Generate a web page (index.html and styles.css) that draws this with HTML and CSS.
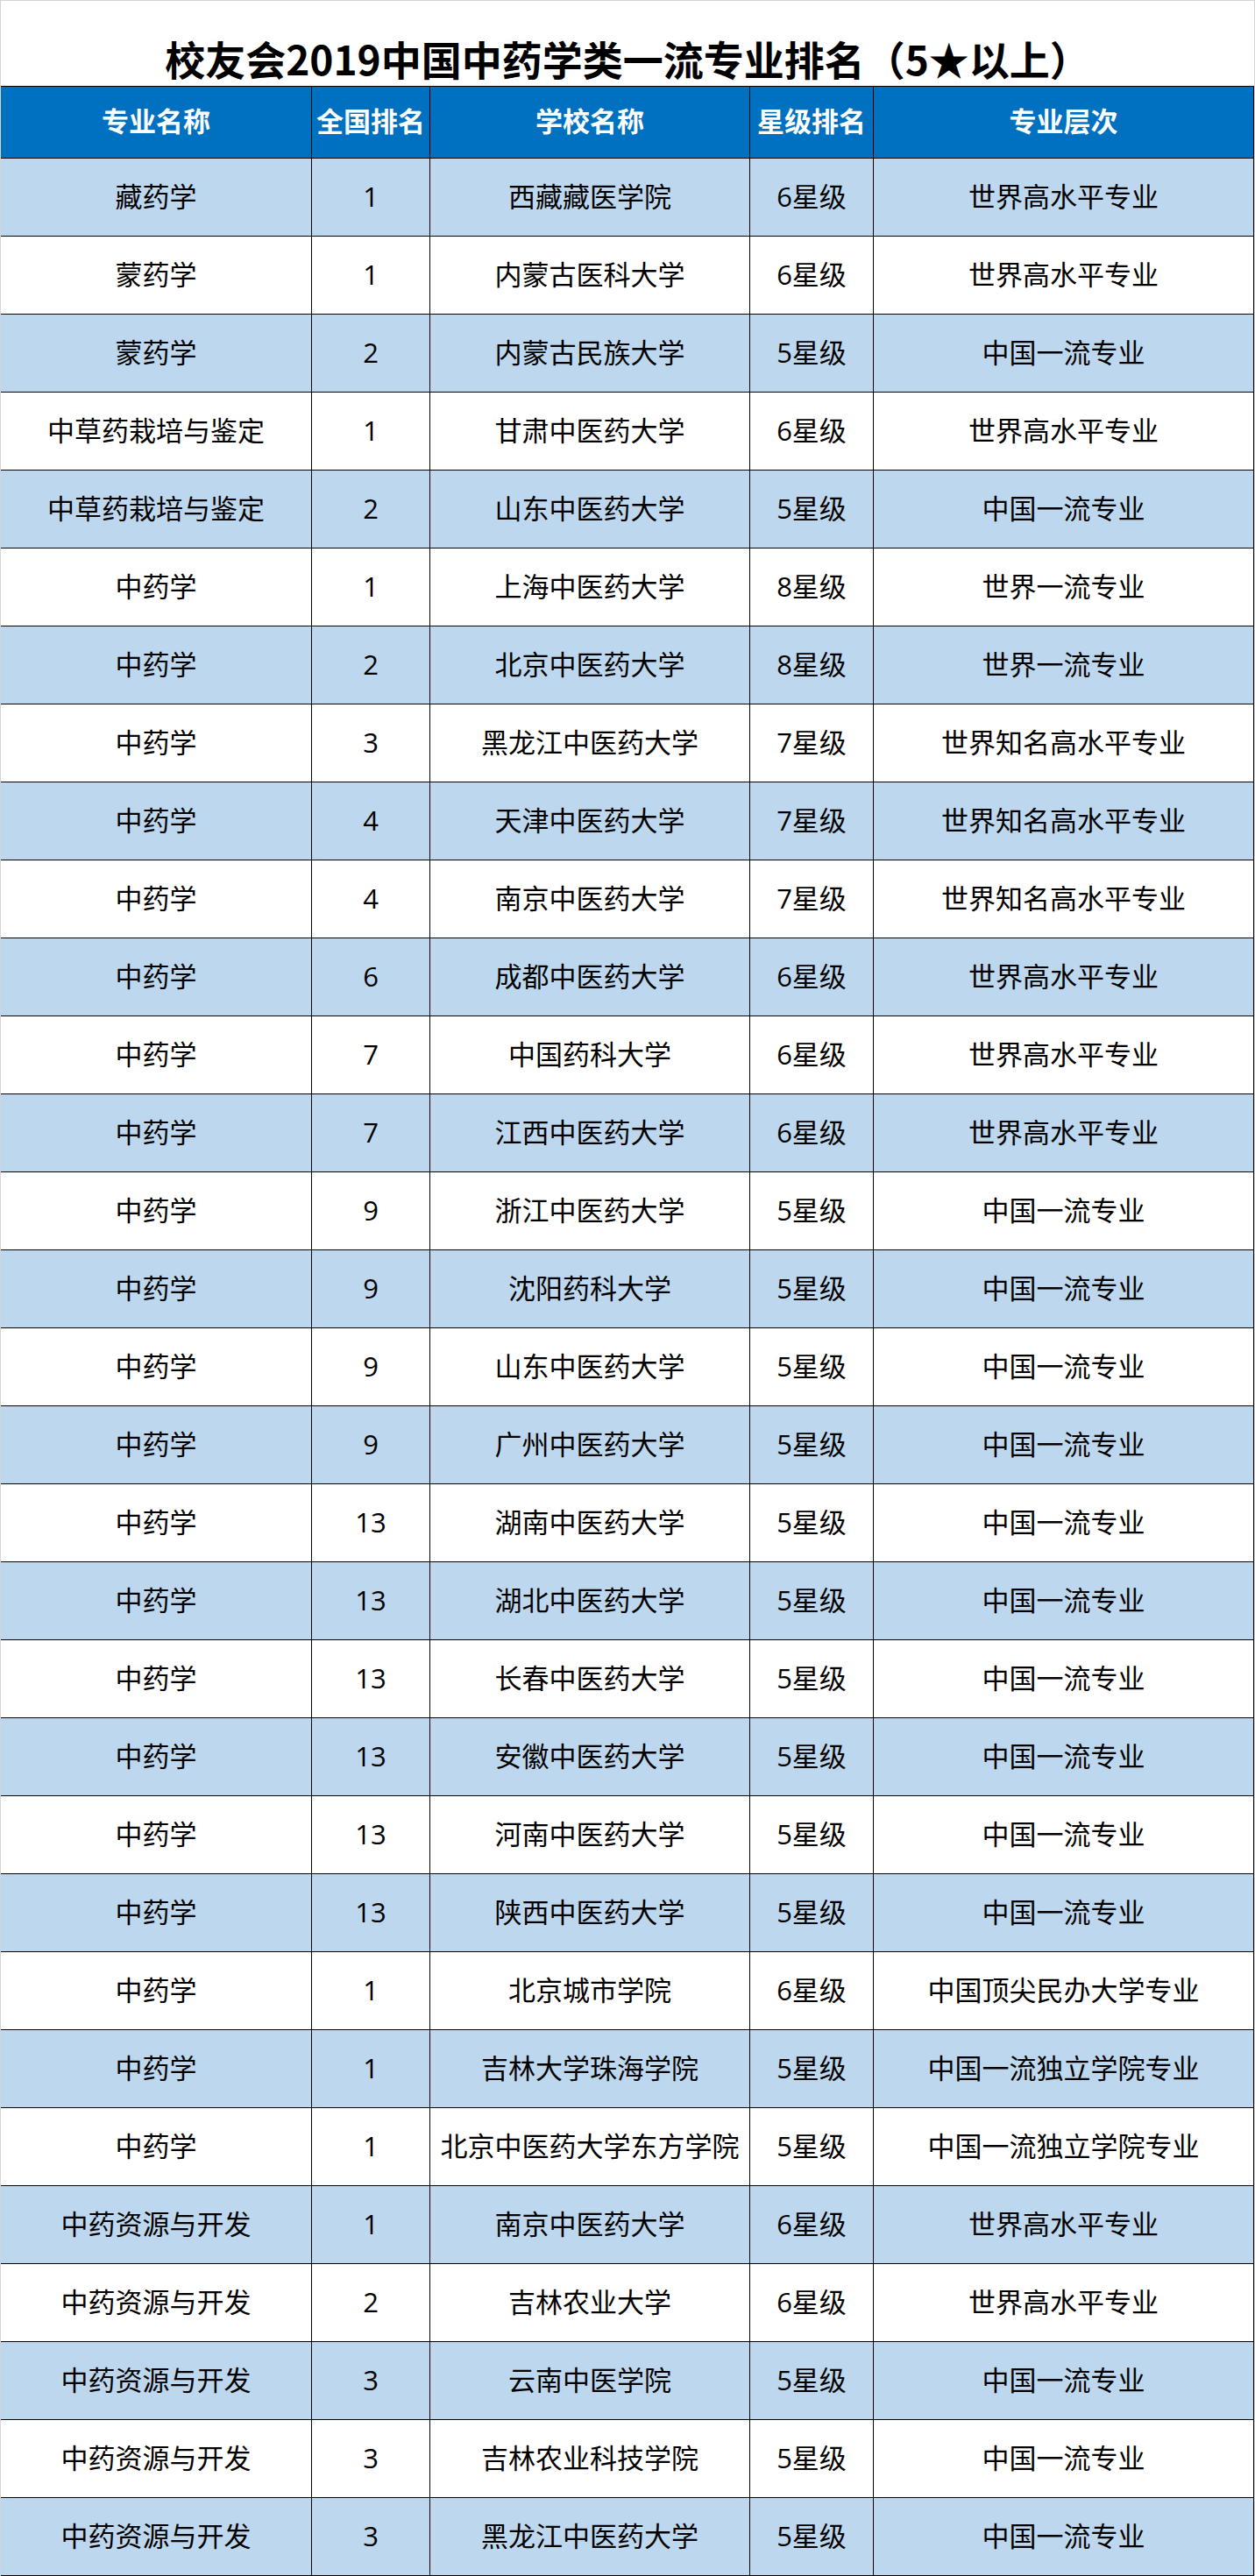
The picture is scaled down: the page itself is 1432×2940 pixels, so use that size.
FILE: index.html
```html
<!DOCTYPE html>
<html lang="zh-CN">
<head>
<meta charset="utf-8">
<title>校友会2019中国中药学类一流专业排名（5★以上）</title>
<link rel="stylesheet" href="styles.css">
</head>
<body>
<div class="page">
  <h1 class="title">校友会2019中国中药学类一流专业排名（5★以上）</h1>
  <div class="table">
    <div class="row head">
      <div class="cell">专业名称</div><div class="cell">全国排名</div><div class="cell">学校名称</div><div class="cell">星级排名</div><div class="cell">专业层次</div>
    </div>
    <div class="row blue"><div class="cell">藏药学</div><div class="cell">1</div><div class="cell">西藏藏医学院</div><div class="cell">6星级</div><div class="cell">世界高水平专业</div></div>
    <div class="row"><div class="cell">蒙药学</div><div class="cell">1</div><div class="cell">内蒙古医科大学</div><div class="cell">6星级</div><div class="cell">世界高水平专业</div></div>
    <div class="row blue"><div class="cell">蒙药学</div><div class="cell">2</div><div class="cell">内蒙古民族大学</div><div class="cell">5星级</div><div class="cell">中国一流专业</div></div>
    <div class="row"><div class="cell">中草药栽培与鉴定</div><div class="cell">1</div><div class="cell">甘肃中医药大学</div><div class="cell">6星级</div><div class="cell">世界高水平专业</div></div>
    <div class="row blue"><div class="cell">中草药栽培与鉴定</div><div class="cell">2</div><div class="cell">山东中医药大学</div><div class="cell">5星级</div><div class="cell">中国一流专业</div></div>
    <div class="row"><div class="cell">中药学</div><div class="cell">1</div><div class="cell">上海中医药大学</div><div class="cell">8星级</div><div class="cell">世界一流专业</div></div>
    <div class="row blue"><div class="cell">中药学</div><div class="cell">2</div><div class="cell">北京中医药大学</div><div class="cell">8星级</div><div class="cell">世界一流专业</div></div>
    <div class="row"><div class="cell">中药学</div><div class="cell">3</div><div class="cell">黑龙江中医药大学</div><div class="cell">7星级</div><div class="cell">世界知名高水平专业</div></div>
    <div class="row blue"><div class="cell">中药学</div><div class="cell">4</div><div class="cell">天津中医药大学</div><div class="cell">7星级</div><div class="cell">世界知名高水平专业</div></div>
    <div class="row"><div class="cell">中药学</div><div class="cell">4</div><div class="cell">南京中医药大学</div><div class="cell">7星级</div><div class="cell">世界知名高水平专业</div></div>
    <div class="row blue"><div class="cell">中药学</div><div class="cell">6</div><div class="cell">成都中医药大学</div><div class="cell">6星级</div><div class="cell">世界高水平专业</div></div>
    <div class="row"><div class="cell">中药学</div><div class="cell">7</div><div class="cell">中国药科大学</div><div class="cell">6星级</div><div class="cell">世界高水平专业</div></div>
    <div class="row blue"><div class="cell">中药学</div><div class="cell">7</div><div class="cell">江西中医药大学</div><div class="cell">6星级</div><div class="cell">世界高水平专业</div></div>
    <div class="row"><div class="cell">中药学</div><div class="cell">9</div><div class="cell">浙江中医药大学</div><div class="cell">5星级</div><div class="cell">中国一流专业</div></div>
    <div class="row blue"><div class="cell">中药学</div><div class="cell">9</div><div class="cell">沈阳药科大学</div><div class="cell">5星级</div><div class="cell">中国一流专业</div></div>
    <div class="row"><div class="cell">中药学</div><div class="cell">9</div><div class="cell">山东中医药大学</div><div class="cell">5星级</div><div class="cell">中国一流专业</div></div>
    <div class="row blue"><div class="cell">中药学</div><div class="cell">9</div><div class="cell">广州中医药大学</div><div class="cell">5星级</div><div class="cell">中国一流专业</div></div>
    <div class="row"><div class="cell">中药学</div><div class="cell">13</div><div class="cell">湖南中医药大学</div><div class="cell">5星级</div><div class="cell">中国一流专业</div></div>
    <div class="row blue"><div class="cell">中药学</div><div class="cell">13</div><div class="cell">湖北中医药大学</div><div class="cell">5星级</div><div class="cell">中国一流专业</div></div>
    <div class="row"><div class="cell">中药学</div><div class="cell">13</div><div class="cell">长春中医药大学</div><div class="cell">5星级</div><div class="cell">中国一流专业</div></div>
    <div class="row blue"><div class="cell">中药学</div><div class="cell">13</div><div class="cell">安徽中医药大学</div><div class="cell">5星级</div><div class="cell">中国一流专业</div></div>
    <div class="row"><div class="cell">中药学</div><div class="cell">13</div><div class="cell">河南中医药大学</div><div class="cell">5星级</div><div class="cell">中国一流专业</div></div>
    <div class="row blue"><div class="cell">中药学</div><div class="cell">13</div><div class="cell">陕西中医药大学</div><div class="cell">5星级</div><div class="cell">中国一流专业</div></div>
    <div class="row"><div class="cell">中药学</div><div class="cell">1</div><div class="cell">北京城市学院</div><div class="cell">6星级</div><div class="cell">中国顶尖民办大学专业</div></div>
    <div class="row blue"><div class="cell">中药学</div><div class="cell">1</div><div class="cell">吉林大学珠海学院</div><div class="cell">5星级</div><div class="cell">中国一流独立学院专业</div></div>
    <div class="row"><div class="cell">中药学</div><div class="cell">1</div><div class="cell">北京中医药大学东方学院</div><div class="cell">5星级</div><div class="cell">中国一流独立学院专业</div></div>
    <div class="row blue"><div class="cell">中药资源与开发</div><div class="cell">1</div><div class="cell">南京中医药大学</div><div class="cell">6星级</div><div class="cell">世界高水平专业</div></div>
    <div class="row"><div class="cell">中药资源与开发</div><div class="cell">2</div><div class="cell">吉林农业大学</div><div class="cell">6星级</div><div class="cell">世界高水平专业</div></div>
    <div class="row blue"><div class="cell">中药资源与开发</div><div class="cell">3</div><div class="cell">云南中医学院</div><div class="cell">5星级</div><div class="cell">中国一流专业</div></div>
    <div class="row"><div class="cell">中药资源与开发</div><div class="cell">3</div><div class="cell">吉林农业科技学院</div><div class="cell">5星级</div><div class="cell">中国一流专业</div></div>
    <div class="row blue"><div class="cell">中药资源与开发</div><div class="cell">3</div><div class="cell">黑龙江中医药大学</div><div class="cell">5星级</div><div class="cell">中国一流专业</div></div>
  </div>
</div>
</body>
</html>
```
FILE: styles.css
```css
html, body {
  margin: 0;
  padding: 0;
  background: #ffffff;
}

body {
  font-family: "Noto Sans CJK SC", "Noto Sans", "Liberation Sans", sans-serif;
  color: #000000;
}

.page {
  width: 1432px;
  height: 2940px;
  box-sizing: border-box;
  border: 1px solid #d4d4d4;
  border-bottom: none;
  overflow: hidden;
}

.title {
  margin: 0;
  height: 97px;
  box-sizing: border-box;
  padding-top: 41px;
  font-size: 46px;
  line-height: 48px;
  font-weight: 700;
  text-align: center;
  letter-spacing: 0;
  white-space: nowrap;
}

.table {
  display: flex;
  flex-direction: column;
  width: 1430px;
}

.row {
  display: grid;
  grid-template-columns: 355px 135px 365px 141px 434px;
  height: 89px;
  box-sizing: border-box;
  border-bottom: 1px solid #000000;
  background: #ffffff;
}

.row.blue {
  background: #bdd7ee;
}

.row.head {
  height: 83px;
  border-top: 1px solid #000000;
  background: #0070c0;
  color: #ffffff;
  font-weight: 700;
}

.cell {
  display: flex;
  align-items: center;
  justify-content: center;
  box-sizing: border-box;
  border-right: 1px solid #000000;
  font-family: "Open Sans", "Noto Sans CJK SC", sans-serif;
  font-size: 31px;
  line-height: 1;
  white-space: nowrap;
  padding-bottom: 2px;
}
```
